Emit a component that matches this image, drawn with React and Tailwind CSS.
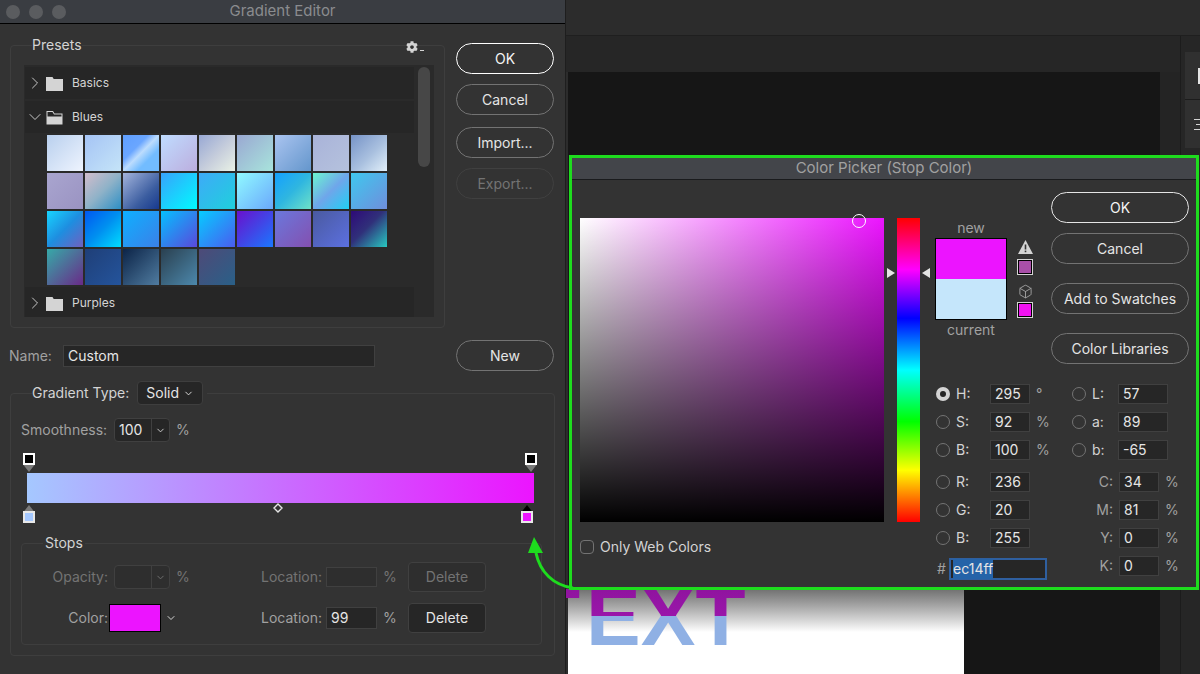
import React from "react";
import { ChevronRight, ChevronDown, Box } from "lucide-react";
import { FaCog } from "react-icons/fa";

const swatches = [
  "#b9d0ee,#eef4fe", "#a5c4f5,#c5e4f8", "#5f9fff 0%,#6aa6ff 35%,#bcdcfd 50%,#72bcff 70%", "#bfdcff,#bcaede",
  "#98a8d4,#c8cfdc 55%,#e9f2e6", "#9aa8d2,#a8e4dc", "#aac4f0,#6496cc", "#a9b3d9,#b5c2dd", "#7693c7,#a9c0df 55%,#e2f0fa",
  "#a9a5cf,#9a93c2", "#d2bdcc,#8fb2c8 50%,#2d8fc5", "#a3b4dc,#3a5c9f 65%,#17398e", "#38a2fb,#00fbff",
  "#3eaaf8,#1fd0dc", "#90faff,#6aa8fc", "#14a0ff,#2fb6e0 50%,#6ee2c8", "#6cf5d0,#6fa6ea 50%,#20d0f4", "#3fc8ee,#6f8edc",
  "#17d4ff,#1e8ee0 50%,#7060c0", "#0058f0,#0090f0 50%,#00ddff", "#0eb0ff,#3b80e8", "#04c0ff,#5a48dc", "#06ccff,#4a5cf0",
  "#6a10cc,#1a78ff", "#6a78dc,#8450b0", "#4a5aa0,#5c70e0", "#2e0a78,#30307a 45%,#28c8c0",
  "#36aaa8,#6a2a88", "#1f3f78,#24549c", "#0c2448,#507ca0", "#2a4050,#4c88ac", "#4e4a78,#2a6088",
];

function Btn({ children, className = "" }) {
  return (
    <div className={`flex h-7.75 items-center justify-center rounded-full border text-sm ${className}`}>
      {children}
    </div>
  );
}

function Folder({ open }) {
  return (
    <svg width="17" height="15" viewBox="0 0 17 15">
      {open ? (
        <path d="M0.5 1h6.5l1.5 2.5h8v11h-16z M1.5 2h5l1.5 2.5h7.5v2h-14z" fill="#d4d4d4" fillRule="evenodd" />
      ) : (
        <path d="M0 1h6.5l1.2 2H17v12H0z" fill="#d4d4d4" />
      )}
    </svg>
  );
}

function ListRow({ label, open }) {
  const Chev = open ? ChevronDown : ChevronRight;
  return (
    <div className="flex h-8 shrink-0 items-center gap-px bg-[#262626] text-xs text-neutral-300">
      <Chev size={20} strokeWidth={1.1} className="text-neutral-300" />
      <Folder open={open} />
      <span className="ml-2">{label}</span>
    </div>
  );
}

function TextBox({ children, className = "" }) {
  return (
    <div className={`flex items-center border border-neutral-700 bg-neutral-800 px-1 text-sm text-neutral-200 ${className}`}>
      {children}
    </div>
  );
}

function Combo({ value, dim }) {
  return (
    <div className={`flex h-6 w-14 items-center rounded-sm border ${dim ? "border-neutral-700 bg-[#2e2e2e]" : "border-neutral-700 bg-neutral-800"}`}>
      <span className="flex-1 pl-1 text-sm text-neutral-200">{value}</span>
      <span className={`flex h-full w-4.5 items-center justify-center border-l ${dim ? "border-neutral-700 text-neutral-500" : "border-neutral-700 text-neutral-300"}`}>
        <ChevronDown size={11} strokeWidth={2} />
      </span>
    </div>
  );
}

function TopStop({ className }) {
  return (
    <svg width="12" height="20" viewBox="0 0 12 20" className={`absolute top-0 ${className}`}>
      <polygon points="0.5,12 11.5,12 6,19" fill="#7a7a7a" />
      <rect x="1" y="1" width="10" height="10" fill="#000" stroke="#fff" strokeWidth="2" />
    </svg>
  );
}

function BottomStop({ className, fill, tip }) {
  return (
    <svg width="12" height="20" viewBox="0 0 12 20" className={`absolute bottom-0 ${className}`}>
      <polygon points="6,1 11.5,8 0.5,8" fill={tip} />
      <rect x="1" y="8" width="10" height="10" fill={fill} stroke="#e8e8e8" strokeWidth="2" />
    </svg>
  );
}

const stopRow = "grid h-7.5 grid-cols-[85px_150px_64px_55px_31px_78px] items-center text-sm";

function GradientEditor() {
  return (
    <div className="absolute left-0 top-0 z-10 flex h-[674px] w-[566px] flex-col border-r border-black/40 bg-[#333333]">
      <div className="relative flex h-6 shrink-0 items-center justify-center border-b border-black bg-[#3a3d42] text-[15px] text-[#8a8c8f]">
        <div className="absolute left-1.5 flex gap-2.25">
          <span className="size-3.5 rounded-full bg-[#5a5c5f]" />
          <span className="size-3.5 rounded-full bg-[#5a5c5f]" />
          <span className="size-3.5 rounded-full bg-[#5a5c5f]" />
        </div>
        Gradient Editor
      </div>

      <div className="flex pl-2.5 pt-2.75">
        <fieldset className="relative h-[293px] w-[435px] rounded-sm border border-[#3e3e3e] pl-3.25 pr-2.5">
          <legend className="ml-2 h-5 text-sm leading-5 text-neutral-300">Presets</legend>
          <div className="absolute -top-3.5 right-5 flex items-end text-neutral-300">
            <FaCog size={12} />
            <span className="mb-0.5 ml-0.5 h-px w-1 bg-neutral-300" />
          </div>
          <div className="relative mt-2.5 flex h-[252px] flex-col gap-0.5 overflow-hidden bg-[#2a2a2a] px-px pr-5 pt-0.5">
            <ListRow label="Basics" />
            <ListRow label="Blues" open />
            <div className="grid h-37.5 shrink-0 grid-cols-[repeat(9,36px)] content-start gap-0.5 pl-5.5">
              {swatches.map((s) => (
                <div key={s} className="h-9" style={{ background: `linear-gradient(135deg,${s})` }} />
              ))}
            </div>
            <ListRow label="Purples" />
            <div className="absolute right-1 top-0.5 h-25 w-3 rounded-full bg-[#474747]" />
          </div>
        </fieldset>

        <div className="ml-2.75 mt-2 flex w-24.5 flex-col gap-2.5">
          <Btn className="border-white text-neutral-100">OK</Btn>
          <Btn className="border-neutral-500 text-neutral-200">Cancel</Btn>
          <Btn className="mt-0.5 border-neutral-500 text-neutral-200">Import...</Btn>
          <Btn className="border-neutral-700 text-neutral-500">Export...</Btn>
        </div>
      </div>

      <div className="mt-3 flex h-7.75 items-center pl-2.25 pr-2.75">
        <span className="w-13.5 text-sm text-neutral-400">Name:</span>
        <TextBox className="h-5.5 w-78">Custom</TextBox>
        <Btn className="ml-auto w-24.5 border-neutral-500 text-neutral-200">New</Btn>
      </div>

      <fieldset className="ml-2.5 mt-2.5 h-[275px] w-[545px] rounded-sm border border-[#3e3e3e] px-2.5">
        <legend className="ml-2.75 flex h-6 items-center gap-2 pr-1 text-sm text-neutral-300">
          Gradient Type:
          <div className="flex h-6 w-16.5 items-center justify-between rounded-sm border border-[#3e3e3e] bg-neutral-800 px-2 text-neutral-200">
            Solid
            <ChevronDown size={11} strokeWidth={2} />
          </div>
        </legend>

        <div className="mt-3.25 flex items-center gap-1.5 text-sm text-neutral-400">
          <span className="w-21.75">Smoothness:</span>
          <Combo value="100" />
          <span>%</span>
        </div>

        <div className="relative mt-2.75 h-[71px] pt-5">
          <TopStop className="left-0.5" />
          <TopStop className="left-[504px]" />
          <div className="ml-1.5 mr-2.5 h-7.5 bg-linear-to-r/srgb from-[#a5c8ff] to-[#ec14ff]" />
          <svg width="10" height="10" viewBox="0 0 10 10" className="absolute left-[252px] top-[50px]">
            <polygon points="5,1 9,5 5,9 1,5" fill="none" stroke="#e5e5e5" strokeWidth="1.4" />
          </svg>
          <BottomStop className="left-0.5" fill="#a5c8ff" tip="#7a7a7a" />
          <BottomStop className="left-[500px]" fill="#ec14ff" tip="#000000" />
        </div>

        <fieldset className="mt-2.25 h-28 w-[521px] rounded-sm border border-[#3e3e3e] pl-px">
          <legend className="ml-5 px-0.5 text-sm leading-5 text-neutral-300">Stops</legend>
          <div className="mt-2.25 flex flex-col gap-2.75">
            <div className={`${stopRow} text-neutral-500`}>
              <span className="text-right">Opacity:</span>
              <div className="flex items-center gap-1.5 pl-1.5">
                <Combo dim />
                <span>%</span>
              </div>
              <span className="text-right">Location:</span>
              <div className="pl-1">
                <div className="h-5 border border-neutral-700 bg-[#2e2e2e]" />
              </div>
              <span className="pl-1.5">%</span>
              <div className="flex h-7.5 items-center justify-center rounded-sm border border-neutral-700 bg-[#2e2e2e]">Delete</div>
            </div>
            <div className={`${stopRow} text-neutral-400`}>
              <span className="text-right">Color:</span>
              <div className="flex items-center gap-1 pl-px">
                <div className="h-7 w-13 border border-black bg-[#ec14ff]" />
                <ChevronDown size={12} strokeWidth={2} className="text-neutral-300" />
              </div>
              <span className="text-right">Location:</span>
              <div className="pl-1">
                <TextBox className="h-5.5">99</TextBox>
              </div>
              <span className="pl-1.5">%</span>
              <div className="flex h-7.5 items-center justify-center rounded-sm border border-neutral-700 bg-neutral-800 text-neutral-200">Delete</div>
            </div>
          </div>
        </fieldset>
      </fieldset>
    </div>
  );
}

function Radio({ on }) {
  return on ? (
    <span className="flex size-3.5 items-center justify-center rounded-full bg-neutral-300">
      <span className="size-1.5 rounded-full bg-neutral-800" />
    </span>
  ) : (
    <span className="size-3.5 rounded-full border border-neutral-500" />
  );
}

function RadioField({ on, label, value, unit, wide }) {
  return (
    <div className="flex h-5 items-center pl-px text-sm text-neutral-300">
      <Radio on={on} />
      <span className={`ml-1.5 ${wide ? "w-6.5" : "w-8.5"}`}>{label}</span>
      <TextBox className={`h-5 ${wide ? "w-12.5" : "w-10"}`}>{value}</TextBox>
      <span className="ml-1.5 text-neutral-400">{unit}</span>
    </div>
  );
}

function CmykField({ label, value }) {
  return (
    <div className="flex h-5 items-center justify-end text-sm text-neutral-400">
      <span>{label}</span>
      <TextBox className="ml-1.5 h-5 w-10 text-neutral-200">{value}</TextBox>
      <span className="ml-1.5 w-4">%</span>
    </div>
  );
}

function ColorPicker() {
  return (
    <div className="absolute left-[569px] top-[155px] z-20 h-[435px] w-[630px] border-3 border-[#1edc1e] bg-[#333333]">
      <div className="flex h-5.5 items-center justify-center border-b border-black/60 bg-[#43454a] text-[15px] text-neutral-400">
        Color Picker (Stop Color)
      </div>
      <div className="flex pl-2">
        <div className="flex flex-col pt-9.5">
          <div className="relative size-76 bg-linear-to-r/srgb from-white to-[#ec14ff]">
            <div className="absolute inset-0 bg-linear-to-b/srgb from-transparent to-black" />
            <span className="absolute left-68 -top-1 size-3.5 rounded-full border border-white" />
          </div>
          <div className="mt-3.75 flex items-center gap-1.5 text-sm text-neutral-300">
            <span className="size-3.5 rounded-sm border border-neutral-500" />
            Only Web Colors
          </div>
        </div>

        <div className="relative ml-3.25 mt-9.5 h-76 w-5.75 bg-[linear-gradient(#ff0000_0%,#ff00ff_17%,#0000ff_33%,#00ffff_50%,#00ff00_67%,#ffff00_83%,#ff0000_100%)]">
          <svg width="8" height="10" viewBox="0 0 8 10" className="absolute -left-2.5 top-12.5">
            <polygon points="0,0 8,5 0,10" fill="#e5e5e5" />
          </svg>
          <svg width="8" height="10" viewBox="0 0 8 10" className="absolute -right-2.5 top-12.5">
            <polygon points="8,0 0,5 8,10" fill="#e5e5e5" />
          </svg>
        </div>

        <div className="ml-3.75 flex w-63.5 flex-col">
          <div className="flex">
            <div className="flex w-18 flex-col items-center pt-10 text-sm leading-4 text-neutral-400">
              <span>new</span>
              <div className="mt-0.5 flex w-full flex-col border border-black">
                <div className="h-10 bg-[#ec14ff]" />
                <div className="h-10 bg-[#c5e6fb]" />
              </div>
              <span className="mt-0.5">current</span>
            </div>
            <div className="ml-2.5 flex w-4 flex-col items-center pt-15">
              <svg width="15" height="14" viewBox="0 0 15 14">
                <polygon points="7.5,0 15,14 0,14" fill="#d4d4d4" />
                <rect x="6.7" y="4.5" width="1.6" height="5" fill="#333" />
                <rect x="6.7" y="10.6" width="1.6" height="1.6" fill="#333" />
              </svg>
              <span className="mt-1.5 size-3.5 border border-black bg-[#a94fa8] outline outline-neutral-300" />
              <Box size={15} strokeWidth={1.5} className="mt-2.5 text-neutral-400" />
              <span className="mt-1 size-3.5 border border-black bg-[#f012f0] outline outline-neutral-300" />
            </div>
            <div className="ml-auto flex w-34.5 flex-col pt-3">
              <Btn className="border-neutral-200 text-neutral-100">OK</Btn>
              <Btn className="mt-2.5 border-neutral-500 text-neutral-200">Cancel</Btn>
              <Btn className="mt-4.75 border-neutral-500 text-neutral-200">Add to Swatches</Btn>
              <Btn className="mt-4.75 border-neutral-500 text-neutral-200">Color Libraries</Btn>
            </div>
          </div>

          <div className="mt-5 flex">
            <div className="flex w-34 flex-col gap-2">
              <RadioField on label="H:" value="295" unit="°" />
              <RadioField label="S:" value="92" unit="%" />
              <RadioField label="B:" value="100" unit="%" />
              <div className="mt-1 flex flex-col gap-2">
                <RadioField label="R:" value="236" />
                <RadioField label="G:" value="20" />
                <RadioField label="B:" value="255" />
              </div>
              <div className="mt-0.5 flex items-center text-sm text-neutral-400">
                <span className="w-3.5 pl-0.5">#</span>
                <div className="flex h-5.5 w-24.5 items-center border-2 border-[#2f5f9f] bg-neutral-800 px-0.5 text-neutral-200">
                  <span className="bg-[#2563a8]">ec14ff</span>
                </div>
              </div>
            </div>
            <div className="flex flex-1 flex-col gap-2">
              <RadioField label="L:" value="57" wide />
              <RadioField label="a:" value="89" wide />
              <RadioField label="b:" value="-65" wide />
              <div className="mt-1 flex flex-col gap-2 pr-2">
                <CmykField label="C:" value="34" />
                <CmykField label="M:" value="81" />
                <CmykField label="Y:" value="0" />
                <CmykField label="K:" value="0" />
              </div>
            </div>
          </div>
        </div>
      </div>
    </div>
  );
}

function GreenArrow() {
  return (
    <svg width="60" height="60" viewBox="0 0 60 60" className="absolute left-[525px] top-[535px] z-30">
      <path d="M48 53 C28 50 15 37 11 18" fill="none" stroke="#1edc1e" strokeWidth="3" />
      <polygon points="9,2 18,18 3,18" fill="#1edc1e" />
    </svg>
  );
}

export default function App() {
  return (
    <div className="relative flex h-[674px] w-full flex-col overflow-hidden bg-[#2c2c2c] [font-family:Inter,sans-serif]">
      <div className="h-9 shrink-0 border-b border-[#1f1f1f]" />
      <div className="flex flex-1">
        <div className="flex flex-1 flex-col">
          <div className="h-9 shrink-0 bg-[#262626]" />
          <div className="flex flex-1">
            <div className="w-[568px]" />
            <div className="flex flex-1 flex-col justify-end bg-[#161616]">
              <div className="relative h-21 w-99 bg-linear-to-b from-neutral-500 via-white via-50% to-white">
                <span className="absolute -left-9.5 -top-3.5 bg-[linear-gradient(#8a1399_0%,#9a16aa_49%,#8fb0e4_49%,#8fb0e4_100%)] bg-clip-text text-[82px] font-bold leading-none text-transparent [font-family:'Liberation_Sans',sans-serif]">
                  <span className="mr-1.5">T</span>EXT
                </span>
              </div>
            </div>
            <div className="w-5 bg-[#242424]" />
          </div>
        </div>
        <div className="w-5 border-l border-[#1c1c1c] bg-[#262626] pl-1 pt-4">
          <div className="flex h-12 items-center justify-end border-b border-[#1c1c1c] bg-[#303030]">
            <span className="h-4 w-0.5 bg-neutral-200" />
          </div>
          <div className="flex h-12 flex-col items-end justify-center gap-1 bg-[#303030]">
            <span className="h-px w-1.5 bg-neutral-300" />
            <span className="h-px w-1 bg-neutral-300" />
            <span className="h-px w-1.5 bg-neutral-300" />
          </div>
        </div>
      </div>
      <GradientEditor />
      <ColorPicker />
      <GreenArrow />
    </div>
  );
}
